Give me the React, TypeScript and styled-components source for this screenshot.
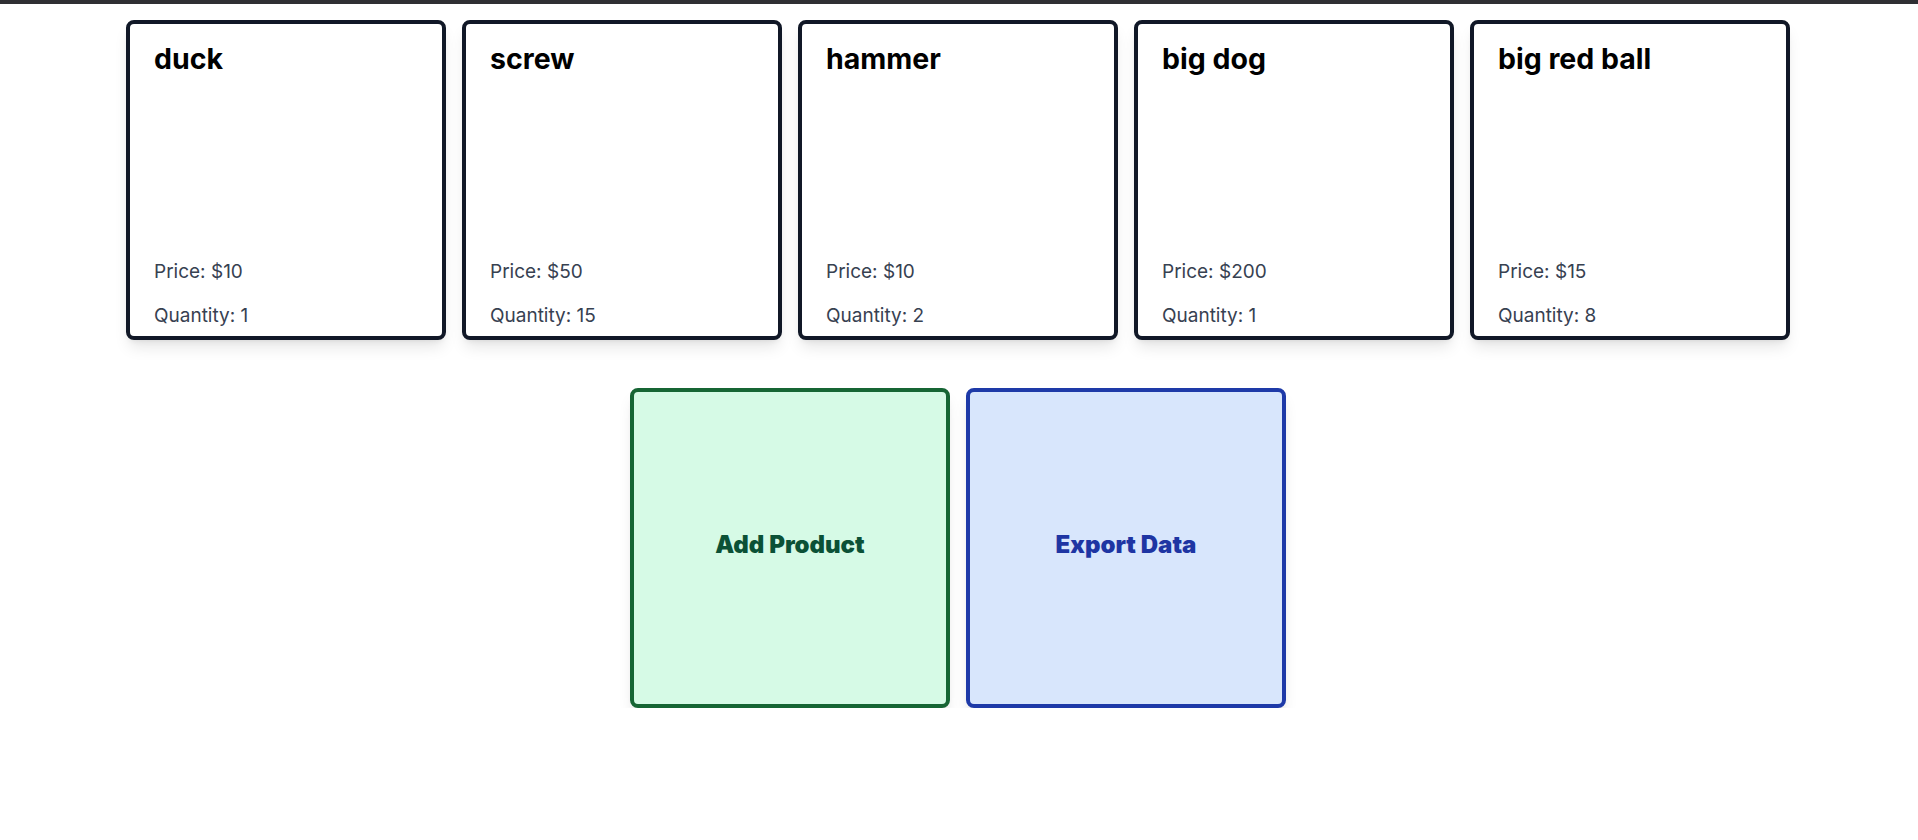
import React from "react";
import styled, { createGlobalStyle } from "styled-components";

const GlobalStyle = createGlobalStyle`
  * { box-sizing: border-box; }
  html, body { margin: 0; padding: 0; background: #ffffff; }
  body { font-family: Inter, "Noto Sans", sans-serif; }
`;

const TopBar = styled.div`
  height: 4px;
  background: #2f2f33;
`;

const Main = styled.main`
  display: flex;
  flex-direction: column;
  align-items: center;
  gap: 48px;
  padding: 16px 2px 0 0;
`;

const CardRow = styled.div`
  display: flex;
  gap: 16px;
  justify-content: center;
`;

const Card = styled.div`
  width: 320px;
  height: 320px;
  border: 4px solid #111827;
  border-radius: 8px;
  background: #ffffff;
  box-shadow: 0 10px 15px -3px rgba(0, 0, 0, 0.1), 0 4px 6px -4px rgba(0, 0, 0, 0.1);
  padding: 17px 24px 6px 24px;
  display: flex;
  flex-direction: column;
`;

const Title = styled.h2`
  margin: 0;
  font-size: 28.5px;
  font-weight: 700;
  color: #000000;
  line-height: 35px;
  flex: 1;
`;

const Info = styled.p`
  margin: 0;
  font-size: 19px;
  line-height: 28px;
  color: #374151;
  & + & { margin-top: 16px; }
`;

const ActionRow = styled.div`
  display: flex;
  gap: 16px;
  justify-content: center;
`;

const ActionButton = styled.button<{ $tone: "green" | "blue" }>`
  width: 320px;
  height: 320px;
  border-radius: 8px;
  border: 4px solid ${(p) => (p.$tone === "green" ? "#166534" : "#1e3aa8")};
  background: ${(p) => (p.$tone === "green" ? "#d6fae6" : "#d8e6fc")};
  color: ${(p) => (p.$tone === "green" ? "#0b5136" : "#1e35a3")};
  font-family: Inter, "Noto Sans", sans-serif;
  font-size: 24px;
  font-weight: 900;
  letter-spacing: 0;
  box-shadow: 0 10px 15px -3px rgba(0, 0, 0, 0.1), 0 4px 6px -4px rgba(0, 0, 0, 0.1);
  display: flex;
  align-items: center;
  justify-content: center;
  cursor: pointer;
  padding: 0 0 8px 0;
`;

const products = [
  { name: "duck", price: 10, quantity: 1 },
  { name: "screw", price: 50, quantity: 15 },
  { name: "hammer", price: 10, quantity: 2 },
  { name: "big dog", price: 200, quantity: 1 },
  { name: "big red ball", price: 15, quantity: 8 },
];

export default function App() {
  return (
    <>
      <GlobalStyle />
      <TopBar />
      <Main>
        <CardRow>
          {products.map((p) => (
            <Card key={p.name}>
              <Title>{p.name}</Title>
              <Info>Price: ${p.price}</Info>
              <Info>Quantity: {p.quantity}</Info>
            </Card>
          ))}
        </CardRow>
        <ActionRow>
          <ActionButton $tone="green">Add Product</ActionButton>
          <ActionButton $tone="blue">Export Data</ActionButton>
        </ActionRow>
      </Main>
    </>
  );
}
